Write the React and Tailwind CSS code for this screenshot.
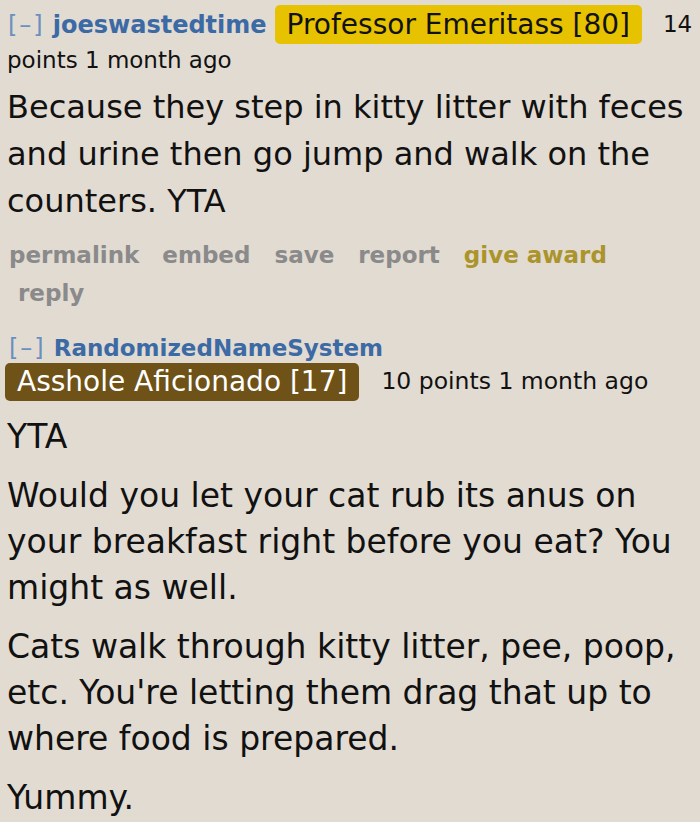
export default function App() {
	const font = { fontFamily: '"DejaVu Sans", Verdana, sans-serif' };
	return (
		<div className="min-h-[822px] w-[700px] overflow-hidden bg-[#e2dbd2] text-[#111]" style={font}>
			{/* First comment */}
			<div className="pl-[7px] pt-[5px]">
				<div className="flex items-center h-[39px] whitespace-nowrap">
					<span className="text-[24px] tracking-[2px] text-[#6a90c0] ml-[1px] mr-[8px]">[–]</span>
					<span className="text-[24px] font-bold text-[#3c6aa5]">joeswastedtime</span>
					<span className="ml-[8px] h-[39px] flex items-center rounded-[5px] bg-[#e6c200] px-[12px] text-[28px] text-[#111]">
						Professor Emeritass [80]
					</span>
					<span className="ml-[21px] text-[23px]">14</span>
				</div>
				<div className="mt-[4px] h-[24px] leading-[24px] text-[23px]">points 1 month ago</div>
				<div className="mt-[12px] text-[32px] leading-[47px]">
					Because they step in kitty litter with feces and urine then go jump and walk on the counters. YTA
				</div>
				<div className="mt-[11px] flex flex-wrap text-[23px] font-bold leading-[38px] text-[#8a8a8a]">
					<span className="ml-[2px] mr-[23px]">permalink</span>
					<span className="mr-[24px]">embed</span>
					<span className="mr-[24px]">save</span>
					<span className="mr-[24px]">report</span>
					<span className="text-[#ab942c] mr-[60px]">give award</span>
					<span className="ml-[11px]">reply</span>
				</div>
			</div>

			{/* Second comment */}
			<div className="pl-[5px] mt-[23px]">
				<div className="flex items-center h-[26px] whitespace-nowrap pl-[4px]">
					<span className="text-[24px] tracking-[2px] text-[#6a90c0] mr-[8px]">[–]</span>
					<span className="text-[23px] font-bold text-[#3c6aa5]">RandomizedNameSystem</span>
				</div>
				<div className="mt-[2px] flex items-center whitespace-nowrap">
					<span className="h-[38px] flex items-center rounded-[5px] bg-[#6e5218] px-[12px] text-[28px] text-white">
						Asshole Aficionado [17]
					</span>
					<span className="ml-[22px] text-[23.5px]">10 points 1 month ago</span>
				</div>
				<div className="mt-[13px] pl-[2px] text-[33px] leading-[46px] space-y-[13px]">
					<p>YTA</p>
					<p>Would you let your cat rub its anus on your breakfast right before you eat? You might as well.</p>
					<p>Cats walk through kitty litter, pee, poop, etc. You're letting them drag that up to where food is prepared.</p>
					<p>Yummy.</p>
				</div>
			</div>
		</div>
	);
}
